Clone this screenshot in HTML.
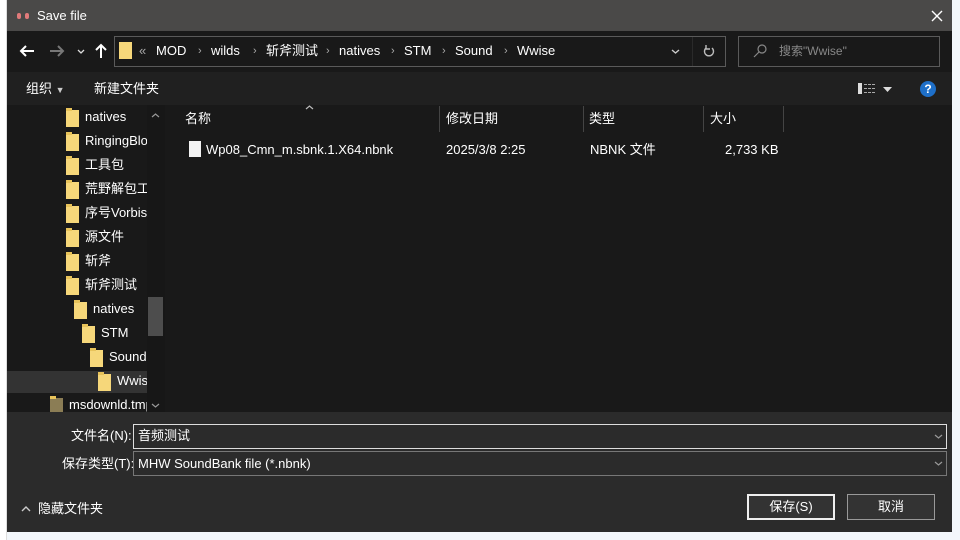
<!DOCTYPE html>
<html><head><meta charset="utf-8"><style>
*{margin:0;padding:0;box-sizing:border-box}
body{width:960px;height:540px;background:#f3f7fb;position:relative;overflow:hidden;font-family:"Liberation Sans","Noto Sans CJK SC",sans-serif;font-size:13px;color:#fff}
.a{position:absolute}
.dlg{left:7px;top:0;width:945px;height:532px;background:#191919}
.t{white-space:nowrap;line-height:16px;height:16px;overflow:visible}
.fold{position:absolute;width:13px;height:17px;background:#f6d77a}
.fold:before{content:"";position:absolute;left:0;top:-2px;width:6px;height:3px;background:#e8c35a}
.sep{color:#aaa;font-size:11px}
</style></head><body>
<div class="a" style="left:0;top:0;width:7px;height:540px;background:#fff;border-right:1px solid #ddd"></div>
<div class="a dlg"></div>
<!-- title -->
<div class="a" style="left:7px;top:0;width:945px;height:31px;background:#4a4948"></div>
<div class="a" style="left:17px;top:13px;width:4px;height:6px;background:#e07a7a;border-radius:2px"></div>
<div class="a" style="left:25px;top:13px;width:4px;height:6px;background:#e07a7a;border-radius:2px"></div>
<div class="a t" style="left:37px;top:8px;font-size:13px">Save file</div>
<svg class="a" style="left:931px;top:10px" width="12" height="12"><path d="M1 1L11 11M11 1L1 11" stroke="#fff" stroke-width="1.4"/></svg>
<!-- nav bar -->
<svg class="a" style="left:19px;top:44px" width="16" height="14"><path d="M15 7H2M7 2L2 7L7 12" stroke="#fff" stroke-width="2" fill="none"/></svg>
<svg class="a" style="left:49px;top:44px" width="16" height="14"><path d="M1 7H14M9 2L14 7L9 12" stroke="#777" stroke-width="2" fill="none"/></svg>
<svg class="a" style="left:77px;top:49px" width="8" height="5"><path d="M1 1L4 4L7 1" stroke="#ddd" stroke-width="1.3" fill="none"/></svg>
<svg class="a" style="left:94px;top:43px" width="14" height="16"><path d="M7 15V2M2 7L7 2L12 7" stroke="#fff" stroke-width="2" fill="none"/></svg>
<div class="a" style="left:114px;top:36px;width:612px;height:31px;border:1px solid #5a5a5a"></div>
<div class="a" style="left:119px;top:42px;width:13px;height:17px;background:#f6d77a"></div>
<div class="a t" style="left:139px;top:43px;color:#aaa">«</div>
<div class="a t" style="left:156px;top:43px">MOD</div>
<div class="a t sep" style="left:198px;top:43px">›</div>
<div class="a t" style="left:211px;top:43px">wilds</div>
<div class="a t sep" style="left:253px;top:43px">›</div>
<div class="a t" style="left:266px;top:43px">斩斧测试</div>
<div class="a t sep" style="left:326px;top:43px">›</div>
<div class="a t" style="left:339px;top:43px">natives</div>
<div class="a t sep" style="left:391px;top:43px">›</div>
<div class="a t" style="left:404px;top:43px">STM</div>
<div class="a t sep" style="left:442px;top:43px">›</div>
<div class="a t" style="left:455px;top:43px">Sound</div>
<div class="a t sep" style="left:504px;top:43px">›</div>
<div class="a t" style="left:517px;top:43px">Wwise</div>
<div class="a" style="left:692px;top:37px;width:1px;height:29px;background:#2a2a2a"></div>
<svg class="a" style="left:671px;top:49px" width="9" height="5"><path d="M1 1L4.5 4L8 1" stroke="#ccc" stroke-width="1.4" fill="none"/></svg>
<svg class="a" style="left:703px;top:44px" width="12" height="14"><path d="M3 4A4.5 4.5 0 1 0 9 4M3 1V5H7" stroke="#bbb" stroke-width="1.4" fill="none"/></svg>
<div class="a" style="left:738px;top:36px;width:202px;height:31px;border:1px solid #5a5a5a"></div>
<svg class="a" style="left:753px;top:44px" width="14" height="14"><circle cx="9" cy="5" r="4" stroke="#888" stroke-width="1.2" fill="none"/><path d="M6 8L1 13" stroke="#888" stroke-width="1.2"/></svg>
<div class="a t" style="left:779px;top:43px;color:#888;font-size:12px">搜索"Wwise"</div>
<!-- command bar -->
<div class="a" style="left:7px;top:72px;width:945px;height:33px;background:#202020"></div>
<div class="a t" style="left:26px;top:81px">组织 <span style="font-size:9px;color:#ccc">▼</span></div>
<div class="a t" style="left:94px;top:81px">新建文件夹</div>
<div class="a" style="left:858px;top:83px;width:4px;height:11px;background:#ddd"></div>
<svg class="a" style="left:863px;top:83px" width="14" height="11"><path d="M1 1.5H13M1 5.5H13M1 9.5H13" stroke="#aaa" stroke-dasharray="3 1" /></svg>
<svg class="a" style="left:883px;top:87px" width="9" height="5"><path d="M0 0H9L4.5 5Z" fill="#ddd"/></svg>
<div class="a" style="left:920px;top:81px;width:16px;height:16px;border-radius:50%;background:#1e6fc8;color:#fff;font-size:12px;font-weight:bold;text-align:center;line-height:16px">?</div>
<!-- nav pane -->
<div class="a" style="left:147px;top:105px;width:18px;height:307px;background:#171717"></div>
<div class="a" style="left:148px;top:297px;width:15px;height:39px;background:#4d4d4d"></div>
<svg class="a" style="left:151px;top:113px" width="9" height="5"><path d="M1 4L4.5 1L8 4" stroke="#999" stroke-width="1.2" fill="none"/></svg>
<svg class="a" style="left:151px;top:403px" width="9" height="5"><path d="M1 1L4.5 4L8 1" stroke="#999" stroke-width="1.2" fill="none"/></svg>
<div class="a" style="left:7px;top:371px;width:140px;height:22px;background:#333"></div>
<div class="a" style="left:7px;top:105px;width:140px;height:307px;overflow:hidden">
<div class="fold" style="left:59px;top:5px"></div><div class="a t" style="left:78px;top:4px">natives</div>
<div class="fold" style="left:59px;top:29px"></div><div class="a t" style="left:78px;top:28px">RingingBlo</div>
<div class="fold" style="left:59px;top:53px"></div><div class="a t" style="left:78px;top:52px">工具包</div>
<div class="fold" style="left:59px;top:77px"></div><div class="a t" style="left:78px;top:76px">荒野解包工具</div>
<div class="fold" style="left:59px;top:101px"></div><div class="a t" style="left:78px;top:100px">序号Vorbis</div>
<div class="fold" style="left:59px;top:125px"></div><div class="a t" style="left:78px;top:124px">源文件</div>
<div class="fold" style="left:59px;top:149px"></div><div class="a t" style="left:78px;top:148px">斩斧</div>
<div class="fold" style="left:59px;top:173px"></div><div class="a t" style="left:78px;top:172px">斩斧测试</div>
<div class="fold" style="left:67px;top:197px"></div><div class="a t" style="left:86px;top:196px">natives</div>
<div class="fold" style="left:75px;top:221px"></div><div class="a t" style="left:94px;top:220px">STM</div>
<div class="fold" style="left:83px;top:245px"></div><div class="a t" style="left:102px;top:244px">Sound</div>
<div class="fold" style="left:91px;top:269px"></div><div class="a t" style="left:110px;top:268px">Wwise</div>
<div class="fold" style="left:43px;top:293px;background:#8b7d55"></div><div class="a t" style="left:62px;top:292px">msdownld.tmp</div>
</div>
<!-- list -->
<svg class="a" style="left:305px;top:105px" width="9" height="5"><path d="M1 4L4.5 1L8 4" stroke="#bbb" stroke-width="1.2" fill="none"/></svg>
<div class="a t" style="left:185px;top:111px">名称</div>
<div class="a" style="left:439px;top:106px;width:1px;height:26px;background:#444"></div>
<div class="a t" style="left:446px;top:111px">修改日期</div>
<div class="a" style="left:583px;top:106px;width:1px;height:26px;background:#444"></div>
<div class="a t" style="left:589px;top:111px">类型</div>
<div class="a" style="left:703px;top:106px;width:1px;height:26px;background:#444"></div>
<div class="a t" style="left:710px;top:111px">大小</div>
<div class="a" style="left:783px;top:106px;width:1px;height:26px;background:#444"></div>
<div class="a" style="left:189px;top:141px;width:12px;height:16px;background:#f2f2f2"></div>
<div class="a t" style="left:206px;top:142px">Wp08_Cmn_m.sbnk.1.X64.nbnk</div>
<div class="a t" style="left:446px;top:142px">2025/3/8 2:25</div>
<div class="a t" style="left:590px;top:142px">NBNK 文件</div>
<div class="a t" style="left:725px;top:142px">2,733 KB</div>
<!-- bottom -->
<div class="a" style="left:7px;top:412px;width:945px;height:120px;background:#2b2b2b"></div>
<div class="a t" style="left:71px;top:428px">文件名(N):</div>
<div class="a" style="left:133px;top:424px;width:814px;height:25px;border:1px solid #ddd;background:#2b2b2b"></div>
<div class="a t" style="left:138px;top:428px">音频测试</div>
<svg class="a" style="left:934px;top:434px" width="9" height="5"><path d="M1 1L4.5 4L8 1" stroke="#999" stroke-width="1.2" fill="none"/></svg>
<div class="a t" style="left:62px;top:456px">保存类型(T):</div>
<div class="a" style="left:133px;top:451px;width:814px;height:25px;border:1px solid #777;background:#2b2b2b"></div>
<div class="a t" style="left:138px;top:456px">MHW SoundBank file (*.nbnk)</div>
<svg class="a" style="left:934px;top:461px" width="9" height="5"><path d="M1 1L4.5 4L8 1" stroke="#999" stroke-width="1.2" fill="none"/></svg>
<svg class="a" style="left:21px;top:506px" width="10" height="6"><path d="M1 5L5 1L9 5" stroke="#ccc" stroke-width="1.4" fill="none"/></svg>
<div class="a t" style="left:38px;top:501px">隐藏文件夹</div>
<div class="a" style="left:747px;top:494px;width:88px;height:26px;border:2px solid #eee;background:#333;text-align:center;line-height:22px">保存(S)</div>
<div class="a" style="left:847px;top:494px;width:88px;height:26px;border:1px solid #999;background:#333;text-align:center;line-height:24px">取消</div>
</body></html>
